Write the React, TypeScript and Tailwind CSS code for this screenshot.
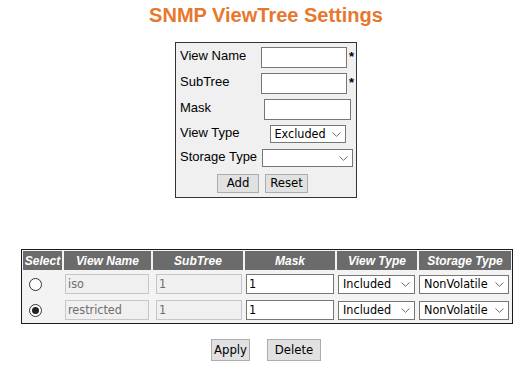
import React from 'react';

const ui = "font-['DejaVu_Sans_Condensed','DejaVu_Sans',sans-serif]";

function Chevron() {
  return (
    <svg width="9" height="5" viewBox="0 0 9 5" className="shrink-0">
      <path d="M0.5 0.5 L4.5 4.3 L8.5 0.5" fill="none" stroke="#6b6b6b" strokeWidth="1" />
    </svg>
  );
}

function SelectBox({ value, width, height = 18 }: { value: string; width: number; height?: number }) {
  return (
    <div
      className={`flex items-center justify-between border border-[#767676] bg-white pl-[4px] pr-[4px] text-[12.5px] text-black ${ui}`}
      style={{ width, height }}
    >
      <span className="leading-none">{value}</span>
      <Chevron />
    </div>
  );
}

function TextBox({ value = '', width, height = 20, disabled = false }: { value?: string; width: number; height?: number; disabled?: boolean }) {
  return (
    <div
      className={`flex items-center pl-[2px] text-[12.5px] ${ui} ${
        disabled ? 'border border-[#c6c6c6] bg-[#f0f0f0] text-[#6d6d6d]' : 'border border-[#767676] bg-white text-black'
      }`}
      style={{ width, height }}
    >
      <span className="leading-none">{value}</span>
    </div>
  );
}

function Button({ label, width, height }: { label: string; width: number; height: number }) {
  return (
    <div
      className={`flex items-center justify-center border border-[#adadad] bg-[#e1e1e1] text-[13px] text-black ${ui}`}
      style={{ width, height }}
    >
      {label}
    </div>
  );
}

function Radio({ checked }: { checked?: boolean }) {
  return (
    <div className="flex h-[13px] w-[13px] items-center justify-center rounded-full border border-[#333] bg-white">
      {checked && <div className="h-[7px] w-[7px] rounded-full bg-[#222]" />}
    </div>
  );
}

function FormRow({ label, h, children }: { label: string; h: string; children: React.ReactNode }) {
  return (
    <div className={`flex items-center ${h}`}>
      <div className="w-[83px] pl-[4px] pb-[4px] text-[13px] leading-[15px] text-black">{label}</div>
      <div className="flex w-[97px] items-center justify-center">{children}</div>
    </div>
  );
}

const rows = [
  { name: 'iso', subtree: '1', mask: '1', viewType: 'Included', storage: 'NonVolatile', checked: false },
  { name: 'restricted', subtree: '1', mask: '1', viewType: 'Included', storage: 'NonVolatile', checked: true },
];

export default function App() {
  return (
    <div className="h-[370px] w-[521px] bg-white pl-[11px] font-['Liberation_Sans',Arial,sans-serif]">
      <h1 className="pt-[4px] text-center text-[20px] font-bold leading-[23px] text-[#e8772e]">
        SNMP ViewTree Settings
      </h1>

      <div className="mx-auto mt-[15px] w-[182px] border border-[#333] bg-[#f0f0f0] py-px">
        <FormRow label="View Name" h="h-[26px]">
          <TextBox width={86} height={21} />
          <span className="ml-[2px] text-[13px] font-bold">*</span>
        </FormRow>
        <FormRow label="SubTree" h="h-[26px]">
          <TextBox width={86} height={21} />
          <span className="ml-[2px] text-[13px] font-bold">*</span>
        </FormRow>
        <FormRow label="Mask" h="h-[26px]">
          <TextBox width={87} height={21} />
        </FormRow>
        <FormRow label="View Type" h="h-[24px]">
          <SelectBox value="Excluded" width={76} />
        </FormRow>
        <FormRow label="Storage Type" h="h-[24px]">
          <SelectBox value="" width={91} />
        </FormRow>
        <div className="flex h-[26px] items-center gap-[6px] pl-[41px]">
          <Button label="Add" width={42} height={19} />
          <Button label="Reset" width={43} height={19} />
        </div>
      </div>

      <div className="ml-[10px] mt-[51px] w-[492px] border border-[#1a1a1a] bg-[#f3f3f3] p-px">
        <div className="grid grid-cols-[39px_87px_90px_90px_80px_92px] gap-[2px]">
          {['Select', 'View Name', 'SubTree', 'Mask', 'View Type', 'Storage Type'].map((h) => (
            <div
              key={h}
              className="flex h-[19px] items-center justify-center bg-[#6b6b6b] text-[12px] font-bold italic text-white"
            >
              {h}
            </div>
          ))}
          {rows.map((r) => (
            <React.Fragment key={r.name}>
              <div className="flex h-[24px] items-center pl-[6px]">
                <Radio checked={r.checked} />
              </div>
              <div className="flex h-[24px] items-center pl-[1px]">
                <TextBox value={r.name} width={84} disabled />
              </div>
              <div className="flex h-[24px] items-center pl-[3px]">
                <TextBox value={r.subtree} width={86} disabled />
              </div>
              <div className="flex h-[24px] items-center pl-[1px]">
                <TextBox value={r.mask} width={88} />
              </div>
              <div className="flex h-[24px] items-center pl-[1px]">
                <SelectBox value={r.viewType} width={77} height={19} />
              </div>
              <div className="flex h-[24px] items-center">
                <SelectBox value={r.storage} width={90} height={19} />
              </div>
            </React.Fragment>
          ))}
        </div>
      </div>

      <div className="mt-[15px] flex justify-center gap-[17px]">
        <Button label="Apply" width={39} height={22} />
        <Button label="Delete" width={54} height={22} />
      </div>
    </div>
  );
}
